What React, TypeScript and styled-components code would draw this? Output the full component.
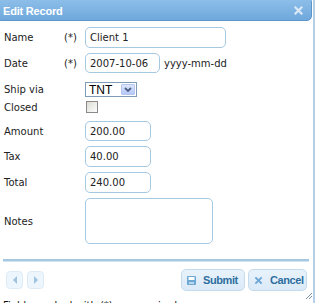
import React from "react";
import styled, { createGlobalStyle } from "styled-components";

const GlobalStyle = createGlobalStyle`
  html, body { margin: 0; padding: 0; background: #fff; }
  body { overflow: hidden; font-family: "DejaVu Sans", Verdana, sans-serif; }
`;

const Dialog = styled.div`
  position: relative;
  box-sizing: border-box;
  width: 315px;
  height: 303px;
  border-right: 2px solid #b5d0e6;
  overflow: hidden;
  background: #fff;
`;

const TitleBar = styled.div`
  box-sizing: border-box;
  display: flex;
  align-items: center;
  width: 316px;
  height: 24px;
  margin: -3px 0 0 -4px;
  padding: 3px 8px 0 6px;
  border: 1px solid #5a95cc;
  border-radius: 5px;
  background: linear-gradient(#8fc0ea, #6fa8dc);
`;

const Title = styled.span`
  font-family: "Liberation Sans", Arial, sans-serif;
  font-weight: bold;
  font-size: 11px;
  letter-spacing: -0.2px;
  color: #fff;
`;

const CloseBox = styled.span`
  margin-left: auto;
  display: flex;
  width: 9px;
  height: 9px;
`;

const Form = styled.div`
  display: flex;
  flex-direction: column;
  padding-left: 4px;
`;

const Row = styled.div<{ $gap: number }>`
  display: grid;
  grid-template-columns: 60px 21px auto;
  align-items: center;
  margin-top: ${(p) => p.$gap}px;
`;

const Label = styled.span`
  font-size: 10px;
  color: #222;
`;

const Req = styled.span`
  font-size: 10px;
  color: #222;
`;

const Field = styled.div`
  display: flex;
  align-items: center;
  gap: 4px;
`;

const TextBox = styled.div<{ $w: number; $h: number }>`
  box-sizing: border-box;
  width: ${(p) => p.$w}px;
  height: ${(p) => p.$h}px;
  display: flex;
  align-items: center;
  padding: 0 4px;
  border: 1px solid #a6c9e2;
  border-radius: 5px;
  background: #fff;
  font-size: 10px;
  color: #222;
`;

const Hint = styled.span`
  font-size: 10px;
  color: #222;
`;

const Select = styled.div`
  box-sizing: border-box;
  width: 52px;
  height: 15px;
  display: flex;
  align-items: center;
  justify-content: space-between;
  padding: 0 1px 0 3px;
  border: 1px solid #7f9db9;
  background: #fff;
  font-family: "Liberation Sans", Arial, sans-serif;
  font-size: 12px;
  color: #000;
`;

const SelectArrow = styled.span`
  box-sizing: border-box;
  width: 14px;
  height: 11px;
  display: flex;
  align-items: center;
  justify-content: center;
  border: 1px solid #b5c8f3;
  border-radius: 1px;
  background: linear-gradient(#dbe6fd, #b4c9f7);
`;

const Check = styled.span`
  box-sizing: border-box;
  display: block;
  width: 12px;
  height: 12px;
  margin-left: 1px;
  border: 1px solid #8a8a8a;
  background: linear-gradient(135deg, #dcdcd6, #fdfdfd);
`;

const Separator = styled.div`
  margin: 15px 4px 0 3px;
  height: 0;
  border-top: 2px solid #a6c9e2;
  border-bottom: 1px solid #d3e4f1;
`;

const ButtonBar = styled.div`
  display: flex;
  align-items: center;
  height: 22px;
  margin-top: 7px;
  padding: 0 6px;
`;

const NavGroup = styled.div`
  display: flex;
  gap: 4px;
  opacity: 0.55;
`;

const NavButton = styled.span`
  box-sizing: border-box;
  display: flex;
  align-items: center;
  justify-content: center;
  width: 17px;
  height: 18px;
  border: 1px solid #c5dbec;
  border-radius: 4px;
  background: #dfeffc;
`;

const Actions = styled.div`
  margin-left: auto;
  display: flex;
  gap: 3px;
`;

const ActionButton = styled.span<{ $w: number }>`
  box-sizing: border-box;
  display: flex;
  align-items: center;
  gap: 7px;
  width: ${(p) => p.$w}px;
  height: 22px;
  padding-left: 5px;
  border: 1px solid #c5dbec;
  border-radius: 5px;
  background: linear-gradient(#e8f2fb, #dbeaf8);
  font-family: "Liberation Sans", Arial, sans-serif;
  font-weight: bold;
  font-size: 11px;
  letter-spacing: -0.4px;
  color: #2e6e9e;
`;

const Footer = styled.div`
  margin-top: 9px;
  padding-left: 3px;
  font-size: 10px;
  color: #111;
  white-space: nowrap;
`;

const Grip = styled.span`
  position: absolute;
  right: 0;
  bottom: 3px;
  width: 8px;
  height: 8px;
  display: flex;
`;

const Icon = ({ d, c, w = 9, sw = 2 }: { d: string; c: string; w?: number; sw?: number }) => (
  <svg width={w} height={w} viewBox="0 0 9 9">
    <path d={d} stroke={c} strokeWidth={sw} fill="none" strokeLinecap="square" />
  </svg>
);

const Disk = () => (
  <svg width="9" height="9" viewBox="0 0 9 9">
    <rect x="0" y="0" width="9" height="9" rx="1" fill="#6da8d5" />
    <rect x="1.5" y="1" width="6" height="3" fill="#fff" />
    <rect x="2" y="6" width="5" height="2" fill="#bcd7ec" />
  </svg>
);

const Tri = ({ dir }: { dir: "l" | "r" }) => (
  <svg width="6" height="8" viewBox="0 0 6 8">
    <path d={dir === "l" ? "M5 0 L1 4 L5 8 Z" : "M1 0 L5 4 L1 8 Z"} fill="#4f94cc" />
  </svg>
);

export default function App() {
  return (
    <>
      <GlobalStyle />
      <Dialog>
        <TitleBar>
          <Title>Edit Record</Title>
          <CloseBox>
            <Icon d="M1.5 1.5 L7.5 7.5 M7.5 1.5 L1.5 7.5" c="#dce9f5" sw={2.2} />
          </CloseBox>
        </TitleBar>
        <Form>
          <Row $gap={6}>
            <Label>Name</Label>
            <Req>(*)</Req>
            <TextBox $w={141} $h={21}>Client 1</TextBox>
          </Row>
          <Row $gap={5}>
            <Label>Date</Label>
            <Req>(*)</Req>
            <Field>
              <TextBox $w={75} $h={20}>2007-10-06</TextBox>
              <Hint>yyyy-mm-dd</Hint>
            </Field>
          </Row>
          <Row $gap={9}>
            <Label>Ship via</Label>
            <span />
            <Select>
              TNT
              <SelectArrow>
                <svg width="8" height="6" viewBox="0 0 8 6">
                  <path d="M1 1 L4 4 L7 1" stroke="#4d6185" strokeWidth="1.8" fill="none" />
                </svg>
              </SelectArrow>
            </Select>
          </Row>
          <Row $gap={4}>
            <Label>Closed</Label>
            <span />
            <Check />
          </Row>
          <Row $gap={8}>
            <Label>Amount</Label>
            <span />
            <TextBox $w={66} $h={20}>200.00</TextBox>
          </Row>
          <Row $gap={5}>
            <Label>Tax</Label>
            <span />
            <TextBox $w={66} $h={21}>40.00</TextBox>
          </Row>
          <Row $gap={5}>
            <Label>Total</Label>
            <span />
            <TextBox $w={66} $h={21}>240.00</TextBox>
          </Row>
          <Row $gap={5}>
            <Label>Notes</Label>
            <span />
            <TextBox $w={128} $h={46} />
          </Row>
        </Form>
        <Separator />
        <ButtonBar>
          <NavGroup>
            <NavButton>
              <Tri dir="l" />
            </NavButton>
            <NavButton>
              <Tri dir="r" />
            </NavButton>
          </NavGroup>
          <Actions>
            <ActionButton $w={64}>
              <Disk />
              Submit
            </ActionButton>
            <ActionButton $w={59}>
              <Icon d="M2 2 L7 7 M7 2 L2 7" c="#6da8d5" sw={1.8} />
              Cancel
            </ActionButton>
          </Actions>
        </ButtonBar>
        <Footer>Fields marked with (*) are required</Footer>
        <Grip>
          <svg width="8" height="8" viewBox="0 0 8 8">
            <path d="M7 1 L1 7 M7 4 L4 7" stroke="#7a8f9f" strokeWidth="1" fill="none" />
          </svg>
        </Grip>
      </Dialog>
    </>
  );
}
